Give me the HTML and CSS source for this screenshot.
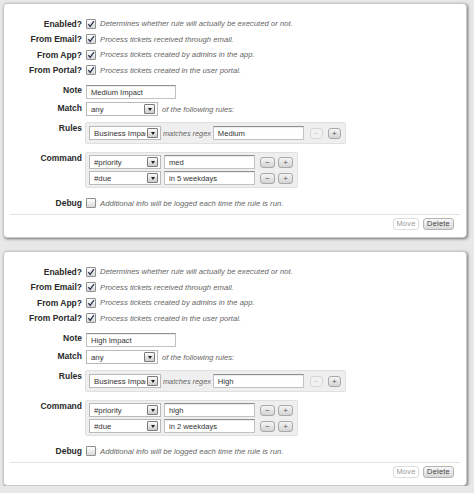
FILE: index.html
```html
<!DOCTYPE html>
<html>
<head>
<meta charset="utf-8">
<link rel="stylesheet" href="styles.css">
</head>
<body>
<div class="page">

  <div class="card">
    <div class="form">
      <div class="row chk"><div class="label">Enabled?</div><span class="cb"><svg width="8" height="8" viewBox="0 0 8 8"><path d="M1.3 4.2 L3.2 6.4 L6.9 1.1" fill="none" stroke="#2a3550" stroke-width="1.3"/></svg></span><span class="desc">Determines whether rule will actually be executed or not.</span></div>
      <div class="row chk"><div class="label">From Email?</div><span class="cb"><svg width="8" height="8" viewBox="0 0 8 8"><path d="M1.3 4.2 L3.2 6.4 L6.9 1.1" fill="none" stroke="#2a3550" stroke-width="1.3"/></svg></span><span class="desc">Process tickets received through email.</span></div>
      <div class="row chk"><div class="label">From App?</div><span class="cb"><svg width="8" height="8" viewBox="0 0 8 8"><path d="M1.3 4.2 L3.2 6.4 L6.9 1.1" fill="none" stroke="#2a3550" stroke-width="1.3"/></svg></span><span class="desc">Process tickets created by admins in the app.</span></div>
      <div class="row chk"><div class="label">From Portal?</div><span class="cb"><svg width="8" height="8" viewBox="0 0 8 8"><path d="M1.3 4.2 L3.2 6.4 L6.9 1.1" fill="none" stroke="#2a3550" stroke-width="1.3"/></svg></span><span class="desc">Process tickets created in the user portal.</span></div>

      <div class="row note"><div class="label">Note</div><div class="input w-note">Medium Impact</div></div>
      <div class="row match"><div class="label">Match</div><div class="select"><span class="val">any</span><span class="dd"></span></div><span class="desc after">of the following rules:</span></div>

      <div class="row rules"><div class="label">Rules</div>
        <div class="group">
          <div class="gline">
            <div class="select"><span class="val">Business Impact</span><span class="dd"></span></div>
            <span class="desc mid">matches regex</span>
            <div class="input w-val">Medium</div>
            <span class="sbtn narrow off first">&minus;</span><span class="sbtn narrow">+</span>
          </div>
        </div>
      </div>

      <div class="row command"><div class="label">Command</div>
        <div class="group">
          <div class="gline">
            <div class="select"><span class="val">#priority</span><span class="dd"></span></div>
            <div class="input w-val gap">med</div>
            <span class="sbtn first">&minus;</span><span class="sbtn">+</span>
          </div>
          <div class="gline second">
            <div class="select"><span class="val">#due</span><span class="dd"></span></div>
            <div class="input w-val gap">in 5 weekdays</div>
            <span class="sbtn first">&minus;</span><span class="sbtn">+</span>
          </div>
        </div>
      </div>

      <div class="row debug"><div class="label">Debug</div><span class="cb"></span><span class="desc">Additional info will be logged each time the rule is run.</span></div>
    </div>
    <div class="sep"></div>
    <div class="footer"><span class="btn off">Move</span><span class="btn del">Delete</span></div>
  </div>

  <div class="card">
    <div class="form">
      <div class="row chk"><div class="label">Enabled?</div><span class="cb"><svg width="8" height="8" viewBox="0 0 8 8"><path d="M1.3 4.2 L3.2 6.4 L6.9 1.1" fill="none" stroke="#2a3550" stroke-width="1.3"/></svg></span><span class="desc">Determines whether rule will actually be executed or not.</span></div>
      <div class="row chk"><div class="label">From Email?</div><span class="cb"><svg width="8" height="8" viewBox="0 0 8 8"><path d="M1.3 4.2 L3.2 6.4 L6.9 1.1" fill="none" stroke="#2a3550" stroke-width="1.3"/></svg></span><span class="desc">Process tickets received through email.</span></div>
      <div class="row chk"><div class="label">From App?</div><span class="cb"><svg width="8" height="8" viewBox="0 0 8 8"><path d="M1.3 4.2 L3.2 6.4 L6.9 1.1" fill="none" stroke="#2a3550" stroke-width="1.3"/></svg></span><span class="desc">Process tickets created by admins in the app.</span></div>
      <div class="row chk"><div class="label">From Portal?</div><span class="cb"><svg width="8" height="8" viewBox="0 0 8 8"><path d="M1.3 4.2 L3.2 6.4 L6.9 1.1" fill="none" stroke="#2a3550" stroke-width="1.3"/></svg></span><span class="desc">Process tickets created in the user portal.</span></div>

      <div class="row note"><div class="label">Note</div><div class="input w-note">High Impact</div></div>
      <div class="row match"><div class="label">Match</div><div class="select"><span class="val">any</span><span class="dd"></span></div><span class="desc after">of the following rules:</span></div>

      <div class="row rules"><div class="label">Rules</div>
        <div class="group">
          <div class="gline">
            <div class="select"><span class="val">Business Impact</span><span class="dd"></span></div>
            <span class="desc mid">matches regex</span>
            <div class="input w-val">High</div>
            <span class="sbtn narrow off first">&minus;</span><span class="sbtn narrow">+</span>
          </div>
        </div>
      </div>

      <div class="row command"><div class="label">Command</div>
        <div class="group">
          <div class="gline">
            <div class="select"><span class="val">#priority</span><span class="dd"></span></div>
            <div class="input w-val gap">high</div>
            <span class="sbtn first">&minus;</span><span class="sbtn">+</span>
          </div>
          <div class="gline second">
            <div class="select"><span class="val">#due</span><span class="dd"></span></div>
            <div class="input w-val gap">in 2 weekdays</div>
            <span class="sbtn first">&minus;</span><span class="sbtn">+</span>
          </div>
        </div>
      </div>

      <div class="row debug"><div class="label">Debug</div><span class="cb"></span><span class="desc">Additional info will be logged each time the rule is run.</span></div>
    </div>
    <div class="sep"></div>
    <div class="footer"><span class="btn off">Move</span><span class="btn del">Delete</span></div>
  </div>

</div>
</body>
</html>
```

FILE: styles.css
```css
html, body {
  margin: 0;
  padding: 0;
}
body {
  background: #e8e8e8;
  font-family: "Liberation Sans", Arial, sans-serif;
  color: #222;
}
.page {
  padding: 3px 0 0 3px;
}
.card {
  width: 462px;
  background: #fff;
  border: 1px solid #c9c9c9;
  border-radius: 4px;
  box-shadow: 1px 1px 3px rgba(0, 0, 0, 0.5);
}
.card + .card {
  margin-top: 13px;
}
.form {
  padding-top: 12px;
}
.row {
  display: flex;
  align-items: flex-start;
}
.label {
  flex: none;
  width: 78px;
  margin-right: 4px;
  text-align: right;
  font-weight: bold;
  font-size: 8.5px;
  line-height: 10px;
  color: #2a2a2a;
}
.row.chk {
  height: 15.5px;
  align-items: center;
}
.cb {
  flex: none;
  width: 10px;
  height: 10px;
  box-sizing: border-box;
  border: 1px solid #8e8e8e;
  border-radius: 1px;
  background: linear-gradient(#ffffff, #d9d9d9);
  margin-right: 4px;
  display: flex;
  align-items: center;
  justify-content: center;
}
.cb svg {
  display: block;
}
.desc {
  font-style: italic;
  font-size: 7.7px;
  color: #666;
  white-space: nowrap;
}
.row.note {
  margin-top: 7px;
}
.row.match {
  margin-top: 3px;
  align-items: center;
}
.row.match .label {
  align-self: flex-start;
  padding-top: 1px;
}
.row.rules {
  margin-top: 6px;
}
.row.rules .label {
  padding-top: 1px;
}
.row.command {
  margin-top: 8px;
}
.row.command .label {
  padding-top: 1px;
}
.row.debug {
  margin-top: 8px;
  height: 14px;
  align-items: center;
}
.desc.after {
  margin-left: 4px;
}
.desc.mid {
  margin: 0 2px;
  font-size: 7.3px;
}
.input {
  flex: none;
  height: 14px;
  box-sizing: border-box;
  border: 1px solid #c2c2c2;
  border-top-color: #8f8f8f;
  box-shadow: inset 0 1px 1px rgba(0, 0, 0, 0.08);
  background: #fff;
  font-size: 7.6px;
  color: #333;
  padding-left: 4px;
  display: flex;
  align-items: center;
  white-space: nowrap;
  overflow: hidden;
}
.w-note {
  width: 90px;
}
.w-val {
  width: 91px;
}
.input.gap {
  margin-left: 3px;
}
.select {
  flex: none;
  width: 72px;
  height: 14px;
  box-sizing: border-box;
  border: 1px solid #b9b9b9;
  background: #fff;
  display: flex;
  align-items: center;
  padding-left: 4px;
  font-size: 7.8px;
  color: #333;
}
.select .val {
  flex: 1;
  overflow: hidden;
  white-space: nowrap;
}
.dd {
  flex: none;
  width: 11px;
  height: 10px;
  box-sizing: border-box;
  margin-right: 2px;
  margin-left: 1px;
  border: 1px solid #7a7a7a;
  border-radius: 1px;
  background: linear-gradient(#fbfbfb, #cdcdcd);
  display: flex;
  align-items: center;
  justify-content: center;
}
.dd::after {
  content: "";
  width: 0;
  height: 0;
  border-left: 2.5px solid transparent;
  border-right: 2.5px solid transparent;
  border-top: 3px solid #1e1e1e;
  margin-top: 1px;
}
.group {
  margin-left: -1px;
  background: #efefef;
  border: 1px solid #e0e0e0;
  border-radius: 2px;
  padding: 3px 4px 3px 3px;
}
.row.command .group {
  padding-top: 2px;
  padding-bottom: 2px;
}
.gline {
  display: flex;
  align-items: center;
}
.gline.second {
  margin-top: 2px;
}
.sbtn {
  flex: none;
  width: 15px;
  height: 11px;
  box-sizing: border-box;
  border: 1px solid #a9a9a9;
  border-radius: 3px;
  background: linear-gradient(#f5f5f5, #d3d3d3);
  font-size: 8px;
  line-height: 9px;
  color: #555;
  text-align: center;
  margin-left: 3px;
}
.sbtn.first {
  margin-left: 5px;
}
.sbtn.narrow {
  width: 13px;
  margin-left: 5px;
}
.sbtn.narrow.first {
  margin-left: 6px;
}
.sbtn.off {
  border-color: #d6d6d6;
  background: #f1f1f1;
  color: #c0c0c0;
}
.sep {
  margin: 4px 6px 0 6px;
  height: 1px;
  background: #e4e4e4;
}
.footer {
  display: flex;
  justify-content: flex-end;
  padding: 3px 12px 7px 0;
}
.btn {
  height: 12px;
  box-sizing: border-box;
  border: 1px solid #b4b4b4;
  border-radius: 3px;
  background: linear-gradient(#f7f7f7, #d8d8d8);
  font-size: 7.5px;
  line-height: 10px;
  color: #444;
  text-align: center;
  letter-spacing: 0.2px;
}
.btn.off {
  width: 26px;
  border-color: #dcdcdc;
  background: #fff;
  color: #9a9a9a;
}
.btn.del {
  width: 31px;
  margin-left: 4px;
}
```
